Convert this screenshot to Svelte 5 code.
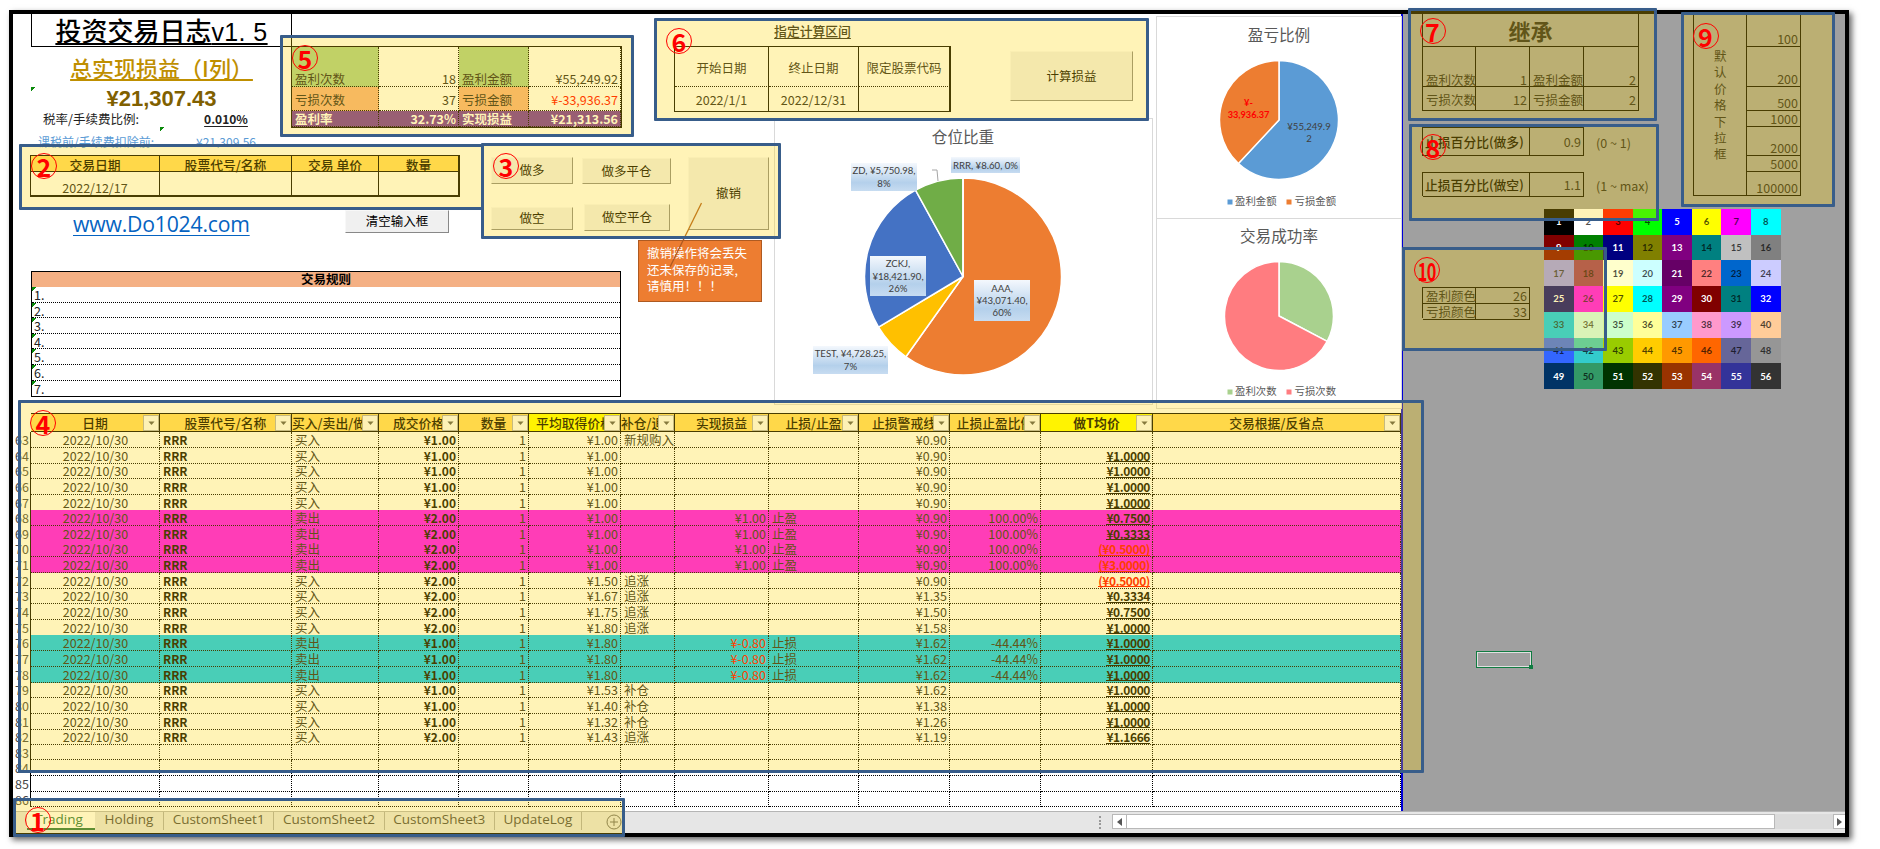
<script>
	const head = [
		{ label: '日期' },
		{ label: '股票代号/名称' },
		{ label: '买入/卖出/做空', left: true },
		{ label: '成交价格' },
		{ label: '数量' },
		{ label: '平均取得价格', hot: true },
		{ label: '补仓/追涨', left: true },
		{ label: '实现损益' },
		{ label: '止损/止盈' },
		{ label: '止损警戒线' },
		{ label: '止损止盈比例' },
		{ label: '做T均价', hot: true, bold: true },
		{ label: '交易根据/反省点' }
	];

	// side, price, average, note, profit, stop, alert line, ratio, T price
	const trades = [
		['买入', '¥1.00', '¥1.00', '新规购入', '', '', '¥0.90', '', ''],
		['买入', '¥1.00', '¥1.00', '', '', '', '¥0.90', '', '¥1.0000'],
		['买入', '¥1.00', '¥1.00', '', '', '', '¥0.90', '', '¥1.0000'],
		['买入', '¥1.00', '¥1.00', '', '', '', '¥0.90', '', '¥1.0000'],
		['买入', '¥1.00', '¥1.00', '', '', '', '¥0.90', '', '¥1.0000'],
		['卖出', '¥2.00', '¥1.00', '', '¥1.00', '止盈', '¥0.90', '100.00%', '¥0.7500'],
		['卖出', '¥2.00', '¥1.00', '', '¥1.00', '止盈', '¥0.90', '100.00%', '¥0.3333'],
		['卖出', '¥2.00', '¥1.00', '', '¥1.00', '止盈', '¥0.90', '100.00%', '(¥0.5000)'],
		['卖出', '¥2.00', '¥1.00', '', '¥1.00', '止盈', '¥0.90', '100.00%', '(¥3.0000)'],
		['买入', '¥2.00', '¥1.50', '追涨', '', '', '¥0.90', '', '(¥0.5000)'],
		['买入', '¥2.00', '¥1.67', '追涨', '', '', '¥1.35', '', '¥0.3334'],
		['买入', '¥2.00', '¥1.75', '追涨', '', '', '¥1.50', '', '¥0.7500'],
		['买入', '¥2.00', '¥1.80', '追涨', '', '', '¥1.58', '', '¥1.0000'],
		['卖出', '¥1.00', '¥1.80', '', '¥-0.80', '止损', '¥1.62', '-44.44%', '¥1.0000'],
		['卖出', '¥1.00', '¥1.80', '', '¥-0.80', '止损', '¥1.62', '-44.44%', '¥1.0000'],
		['卖出', '¥1.00', '¥1.80', '', '¥-0.80', '止损', '¥1.62', '-44.44%', '¥1.0000'],
		['买入', '¥1.00', '¥1.53', '补仓', '', '', '¥1.62', '', '¥1.0000'],
		['买入', '¥1.00', '¥1.40', '补仓', '', '', '¥1.38', '', '¥1.0000'],
		['买入', '¥1.00', '¥1.32', '补仓', '', '', '¥1.26', '', '¥1.0000'],
		['买入', '¥2.00', '¥1.43', '追涨', '', '', '¥1.19', '', '¥1.1666']
	];
	const rows = Array.from({ length: 24 }, (_, i) => ({ n: 63 + i, t: trades[i] }));

	const palette = (
		'000000 FFFFFF FF0000 00FF00 0000FF FFFF00 FF00FF 00FFFF ' +
		'800000 008000 000080 808000 800080 008080 C0C0C0 808080 ' +
		'9999FF 993366 FFFFCC CCFFFF 660066 FF8080 0066CC CCCCFF ' +
		'000080 FF00FF FFFF00 00FFFF 800080 800000 008080 0000FF ' +
		'00CCFF CCFFFF CCFFCC FFFF99 99CCFF FF99CC CC99FF FFCC99 ' +
		'3366FF 33CCCC 99CC00 FFCC00 FF9900 FF6600 666699 969696 ' +
		'003366 339966 003300 333300 993300 993366 333399 333333'
	).split(' ');
	const lightText = [1, 5, 9, 11, 13, 21, 25, 29, 30, 32, 49, 51, 52, 53, 54, 55, 56];

	const buttons = [
		{ text: '做多', x: 491, y: 157, w: 82, h: 27 },
		{ text: '做多平仓', x: 582, y: 158, w: 89, h: 26 },
		{ text: '做空', x: 491, y: 207, w: 82, h: 23 },
		{ text: '做空平仓', x: 584, y: 204, w: 86, h: 27 },
		{ text: '撤销', x: 688, y: 157, w: 81, h: 73 },
		{ text: '清空输入框', x: 345, y: 210, w: 104, h: 23 },
		{ text: '计算损益', x: 1010, y: 51, w: 123, h: 50 }
	];

	const charts = [
		{
			title: '仓位比重', x: 774, y: 118, w: 379, h: 287, cx: 189, cy: 158.5, r: 98.5, ty: 25,
			slices: [
				{ v: 43071.4, c: '#ed7d31' },
				{ v: 4728.25, c: '#ffc000' },
				{ v: 18421.9, c: '#4472c4' },
				{ v: 5750.98, c: '#70ad47' },
				{ v: 8.6, c: '#5b9bd5' }
			],
			labels: [
				{ x: 200, y: 162, w: 56, h: 41, lines: ['AAA,', '¥43,071.40,', '60%'] },
				{ x: 96, y: 138, w: 56, h: 40, lines: ['ZCKJ,', '¥18,421.90,', '26%'] },
				{ x: 77, y: 45, w: 66, h: 28, lines: ['ZD, ¥5,750.98,', '8%'] },
				{ x: 177, y: 39, w: 69, h: 16, lines: ['RRR, ¥8.60, 0%'] },
				{ x: 39, y: 228, w: 75, h: 28, lines: ['TEST, ¥4,728.25,', '7%'] }
			]
		},
		{
			title: '盈亏比例', x: 1156, y: 16, w: 246, h: 203, cx: 123, cy: 104, r: 59.5, ty: 25,
			slices: [
				{ v: 55249.92, c: '#5b9bd5' },
				{ v: 33936.37, c: '#ed7d31' }
			],
			notes: [
				{ x: 153, y: 113.5, lines: ['¥55,249.9', '2'] },
				{ x: 92.5, y: 90, red: true, lines: ['¥-', '33,936.37'] }
			],
			legend: ['盈利金额', '亏损金额']
		},
		{
			title: '交易成功率', x: 1156, y: 218, w: 246, h: 191, cx: 123, cy: 98, r: 54.5, ty: 24,
			slices: [
				{ v: 18, c: '#a9d18e' },
				{ v: 37, c: '#ff7c80' }
			],
			legend: ['盈利次数', '亏损次数']
		}
	];

	function arcs({ slices, cx, cy, r }) {
		const total = slices.reduce((s, d) => s + d.v, 0);
		let a = 0;
		return slices.map((d) => {
			const b = a + (d.v / total) * Math.PI * 2;
			const path = `M${cx},${cy}L${cx + r * Math.sin(a)},${cy - r * Math.cos(a)}A${r},${r} 0 ${b - a > Math.PI ? 1 : 0} 1 ${cx + r * Math.sin(b)},${cy - r * Math.cos(b)}Z`;
			a = b;
			return { path, c: d.c };
		});
	}

	// highlighted regions with their number badge (bx, by is the badge centre)
	const regions = [
		{ n: 1, x: 13, y: 798, w: 612, h: 39, bx: 37.5, by: 820 },
		{ n: 2, x: 19, y: 144, w: 465, h: 66, bx: 44, by: 166 },
		{ n: 3, x: 481, y: 143, w: 300, h: 96, bx: 506, by: 165.5 },
		{ n: 4, x: 18, y: 400, w: 1406, h: 373, bx: 43, by: 422.5 },
		{ n: 5, x: 280, y: 35, w: 354, h: 102, bx: 305, by: 57.5 },
		{ n: 6, x: 654, y: 18, w: 495, h: 103, bx: 679, by: 41 },
		{ n: 7, x: 1408, y: 8, w: 249, h: 113, bx: 1432.5, by: 30.5 },
		{ n: 8, x: 1409, y: 124, w: 250, h: 97, bx: 1433, by: 146.5 },
		{ n: 9, x: 1681, y: 12, w: 154, h: 195, bx: 1705.5, by: 35.5 },
		{ n: 10, x: 1402, y: 247, w: 205, h: 104, bx: 1426.5, by: 269.5 }
	];

	const prices = [100, 200, 500, 1000, 2000, 5000, 100000];
	const tabs = ['Holding', 'CustomSheet1', 'CustomSheet2', 'CustomSheet3', 'UpdateLog'];
</script>

<main>
	<div class="window">
		<div class="sheet">
			<div class="grid top">
				<div class="title"><u>投资交易日志<span>v1.&nbsp;5</span></u></div>
				<div class="total-label"><u>总实现损益（I列）</u></div>
				<div class="total flag">¥21,307.43</div>
				<div class="rate">税率/手续费比例:</div>
				<div class="rate-value"><u>0.010%</u></div>
				<div class="before">课税前/手续费扣除前:</div>
				<div class="before-value flag">¥21,309.56</div>

				<div class="stats">
					<div class="green">盈利次数</div>
					<div class="num">18</div>
					<div class="green">盈利金额</div>
					<div class="num">¥55,249.92</div>
					<div class="orange">亏损次数</div>
					<div class="num">37</div>
					<div class="orange">亏损金额</div>
					<div class="num red">¥-33,936.37</div>
					<div class="purple">盈利率</div>
					<div class="purple num">32.73%</div>
					<div class="purple">实现损益</div>
					<div class="purple num">¥21,313.56</div>
				</div>

				<div class="range-title"><u>指定计算区间</u></div>
				<div class="range">
					<div>开始日期</div>
					<div>终止日期</div>
					<div>限定股票代码</div>
					<div>2022/1/1</div>
					<div>2022/12/31</div>
					<div></div>
				</div>

				<div class="entry">
					<div class="th">交易日期</div>
					<div class="th">股票代号/名称</div>
					<div class="th">交易 单价</div>
					<div class="th">数量</div>
					<div>2022/12/17</div>
					<div></div>
					<div></div>
					<div></div>
				</div>

				<a class="site" href="#top">www.Do1024.com</a>

				<div class="rules">
					<div class="rules-head">交易规则</div>
					{#each [1, 2, 3, 4, 5, 6, 7] as n}
						<div class="rule flag">{n}.</div>
					{/each}
				</div>

				<div class="inherit">
					<div class="inherit-title">继承</div>
					<div class="tall">盈利次数</div>
					<div class="tall num">1</div>
					<div class="tall">盈利金额</div>
					<div class="tall num">2</div>
					<div>亏损次数</div>
					<div class="num">12</div>
					<div>亏损金额</div>
					<div class="num">2</div>
				</div>

				<div class="stop long">
					<b>止损百分比(做多)</b>
					<div class="num">0.9</div>
				</div>
				<div class="hint long">(0 ~ 1)</div>
				<div class="stop short">
					<b>止损百分比(做空)</b>
					<div class="num">1.1</div>
				</div>
				<div class="hint short">(1 ~ max)</div>

				<div class="prices">
					<div class="prices-label">默认价格下拉框</div>
					{#each prices as p}
						<div class="price">{p}</div>
					{/each}
				</div>

				<div class="colors">
					<div>盈利颜色</div>
					<div class="num">26</div>
					<div>亏损颜色</div>
					<div class="num">33</div>
				</div>
			</div>

			<div class="grid head">
				<i></i>
				{#each head as h}
					<div class="th" class:hot={h.hot} class:left={h.left} class:bold={h.bold}>
						{h.label}
						<span class="filter"><svg viewBox="0 0 8 5"><path d="M0.5 0.5h7L4 4.5z" /></svg></span>
					</div>
				{/each}
			</div>
			{#each rows as { n, t }}
				<div class="grid row" class:win={t && t[5] === '止盈'} class:loss={t && t[5] === '止损'}>
					<div class="n">{n}</div>
					<div class="c">{t ? '2022/10/30' : ''}</div>
					<div class="b">{t ? 'RRR' : ''}</div>
					<div>{t ? t[0] : ''}</div>
					<div class="num b">{t ? t[1] : ''}</div>
					<div class="num">{t ? '1' : ''}</div>
					<div class="num">{t ? t[2] : ''}</div>
					<div>{t ? t[3] : ''}</div>
					<div class="num" class:red={t && t[4].includes('-')}>{t ? t[4] : ''}</div>
					<div>{t ? t[5] : ''}</div>
					<div class="num">{t ? t[6] : ''}</div>
					<div class="num">{t ? t[7] : ''}</div>
					<div class="num b t" class:red={t && t[8].includes('(')}>
						{#if t && t[8]}<span>{t[8]}</span>{/if}
					</div>
					<div></div>
				</div>
			{/each}
		</div>

		<footer>
			<div class="tab active">Trading</div>
			{#each tabs as tab}
				<div class="tab {tab}">{tab}</div>
			{/each}
			<svg class="plus" viewBox="0 0 16 16"><circle cx="8" cy="8" r="7" /><path d="M8 4v8M4 8h8" /></svg>
			<div class="dots"><i></i><i></i><i></i><i></i></div>
			<div class="scroll">
				<div class="arrow"><svg viewBox="0 0 5 8"><path d="M5 0v8L0 4z" /></svg></div>
				<div class="thumb"></div>
				<div class="arrow end"><svg viewBox="0 0 5 8"><path d="M0 0v8l5-4z" /></svg></div>
			</div>
		</footer>
	</div>

	<div class="callout">撤销操作将会丢失<br />还未保存的记录,<br />请慎用！！！</div>

	{#each charts as ch}
		<svg class="chart" style="left: {ch.x}px; top: {ch.y}px;" width={ch.w} height={ch.h}>
			<defs>
				<linearGradient id="label" x1="0" y1="0" x2="0" y2="1">
					<stop offset="0" stop-color="#f4f8fd" />
					<stop offset="0.7" stop-color="#b4d0eb" />
					<stop offset="1" stop-color="#c7dcf1" />
				</linearGradient>
			</defs>
			<rect class="frame" x="0.5" y="0.5" width={ch.w - 1} height={ch.h - 1} />
			<text class="chart-title" x={ch.cx} y={ch.ty}>{ch.title}</text>
			{#each arcs(ch) as arc}
				<path class="slice" d={arc.path} fill={arc.c} />
			{/each}
			{#if ch.labels}
				<path class="leader" d="M158 52h5l1 11" />
				{#each ch.labels as l}
					<rect x={l.x} y={l.y} width={l.w} height={l.h} fill="url(#label)" />
					{#each l.lines as line, i}
						<text class="label" x={l.x + l.w / 2} y={l.y + l.h / 2 + 3.5 + (i - (l.lines.length - 1) / 2) * 12.2}>{line}</text>
					{/each}
				{/each}
			{/if}
			{#each ch.notes || [] as note}
				{#each note.lines as line, i}
					<text class="label" class:alert={note.red} x={note.x} y={note.y + i * 12}>{line}</text>
				{/each}
			{/each}
			{#each ch.legend || [] as name, i}
				<rect x={71.5 + i * 59} y={ch.h - 19.5} width="5" height="5" fill={ch.slices[i].c} />
				<text class="legend" x={79 + i * 59.5} y={ch.h - 14}>{name}</text>
			{/each}
		</svg>
	{/each}

	{#each buttons as b}
		<button style="left: {b.x}px; top: {b.y}px; width: {b.w}px; height: {b.h}px;">{b.text}</button>
	{/each}

	<svg class="pointer" width="34" height="66"><path d="M32.5 1L1 65" /></svg>

	<div class="palette">
		{#each palette as c, i}
			<div class:light={lightText.includes(i + 1)} style="background: #{c};">{i + 1}</div>
		{/each}
	</div>

	<div class="selection"></div>

	{#each regions as r}
		<div class="region" style="left: {r.x}px; top: {r.y}px; width: {r.w}px; height: {r.h}px;"></div>
		<span class="badge" class:narrow={r.n > 9} style="left: {r.bx - 13}px; top: {r.by - 13}px;"><b>{r.n}</b></span>
	{/each}
</main>

<style>
	:global(body) {
		background: #fff;
	}

	main {
		position: relative;
		box-sizing: border-box;
		width: 1880px;
		height: 849px;
		padding: 10px 0 0 9px;
		overflow: hidden;
		font-family: 'Noto Sans CJK SC', 'Noto Sans', sans-serif;
		font-size: 12.5px;
		line-height: 15px;
		color: #222;
	}

	main :global(*) {
		box-sizing: border-box;
	}

	u {
		text-underline-offset: 2px;
	}

	.window {
		display: flex;
		flex-direction: column;
		width: 1840px;
		height: 827px;
		border: 4px solid #000;
		box-shadow: 3px 3px 6px rgba(0, 0, 0, 0.6);
	}

	.sheet {
		height: 797px;
		overflow: hidden;
		background: linear-gradient(to right, #fff 1388px, #0000d8 1388px, #0000d8 1390px, #a0a0a0 1390px);
	}

	.grid {
		display: grid;
		grid-template-columns: 18px 129px 132px 87px 80px 70px 92px 54px 94px 90px 91px 91px 112px 248px;
	}

	.top {
		grid-template-columns:
			18px 129px 132px 87px 80px 70px 92px 54px 94px 90px 91px 91px 112px 248px
			21px 54px 54px 54px 55px 54px 54px 54px;
		grid-template-rows: 33px 40px 24px 16px 29px 16px 24px 75px 16px 16px 15px 16px 15px 16px 16px 16px 16px;
		height: 399px;
		white-space: nowrap;
	}

	.num {
		text-align: right;
	}

	.red {
		color: #ff0000 !important;
	}

	.flag {
		background-image: linear-gradient(135deg, #0a8a0a 3.5px, transparent 3.5px);
		background-repeat: no-repeat;
	}

	.title {
		grid-area: 1 / 2 / 2 / 4;
		border: 1px solid #000;
		border-top: 0;
		text-align: center;
		font-size: 26px;
		font-weight: 500;
		line-height: 32px;
		color: #000;
	}

	.title span {
		font-family: 'Liberation Sans', sans-serif;
		font-size: 25px;
		letter-spacing: 0.4px;
	}

	.total-label {
		grid-area: 2 / 2 / 3 / 4;
		text-align: center;
		font-size: 22px;
		font-weight: 500;
		line-height: 40px;
		color: #bf8f00;
	}

	.total {
		grid-area: 3 / 2 / 4 / 4;
		text-align: center;
		font: bold 22px/23px 'Liberation Sans', sans-serif;
		color: #806000;
	}

	.rate {
		grid-area: 4 / 2;
		padding-left: 12px;
	}

	.rate-value {
		grid-area: 4 / 3;
		text-align: center;
		font-size: 12px;
		font-weight: bold;
	}

	.before,
	.before-value {
		grid-area: 5 / 2;
		height: 21px;
		padding: 7px 0 0 7px;
		overflow: hidden;
		font-size: 12px;
		color: #5b9bd5;
	}

	.before-value {
		grid-area: 5 / 3;
		padding-left: 36px;
	}

	.stats {
		grid-area: 2 / 4 / 5 / 8;
		display: grid;
		grid-template: 40px 24px 16px / 87px 80px 70px 92px;
		align-items: stretch;
		outline: 1px solid #000;
	}

	.stats div {
		display: flex;
		align-items: flex-end;
		padding: 0 2px 0 3px;
		border: dotted #000;
		border-width: 0 1px 1px 0;
		line-height: 14px;
	}

	.stats div:nth-child(n + 5) {
		align-items: center;
		padding-top: 2px;
	}

	.stats div:nth-child(n + 9) {
		padding-top: 0;
	}

	.stats .num {
		justify-content: flex-end;
	}

	.green {
		background: #a9d08e;
	}

	.orange {
		background: #f4b084;
	}

	.stats .purple {
		background: #7030a0;
		color: #fff;
		font-weight: bold;
	}

	.range-title {
		grid-area: 1 / 9 / 2 / 12;
		text-align: center;
		font-weight: 500;
		font-size: 12.8px;
		line-height: 33px;
	}

	.range {
		grid-area: 2 / 9 / 4 / 12;
		display: grid;
		grid-template: 40px 24px / 94px 90px 91px;
		outline: 1.5px solid #000;
		text-align: center;
		line-height: 42px;
	}

	.range div {
		border-right: 1px solid #000;
		border-bottom: 1px dotted #000;
	}

	.range div:nth-child(n + 4) {
		border-bottom: 0;
		line-height: 25px;
	}

	.entry {
		grid-area: 6 / 2 / 8 / 6;
		display: grid;
		grid-template: 16px 24px / 129px 132px 87px 80px;
		outline: 1px solid #000;
		outline-offset: -0.5px;
	}

	.entry div {
		border: solid #000;
		border-width: 0 1px 1px 0;
		text-align: center;
		line-height: 32px;
	}

	.entry .th {
		line-height: 17px;
	}

	.th {
		background: #ffd966;
		font-size: 12.8px;
		font-weight: 500;
		color: #000;
	}

	.site {
		grid-area: 8 / 2 / 9 / 4;
		padding: 14px 0 0 42px;
		font: 21.2px/28px 'Open Sans', 'Noto Sans', sans-serif;
		letter-spacing: -0.2px;
		text-decoration-thickness: 1px;
		text-underline-offset: 3px;
		color: #0563c1;
	}

	.rules {
		grid-area: 9 / 2 / 17 / 8;
		display: grid;
		grid-template-rows: subgrid;
		border: 1px solid #000;
		outline: 1px solid #000;
		outline-offset: -1.5px;
	}

	.rules-head {
		background: #f4b084;
		text-align: center;
		font-weight: bold;
		line-height: 14px;
		color: #000;
	}

	.rule {
		padding: 1px 0 0 2px;
		border-bottom: 1px dotted #000;
		line-height: 14px;
	}

	.rule:last-child {
		border-bottom: 0;
	}

	.inherit {
		grid-area: 1 / 16 / 4 / 20;
		display: grid;
		grid-template: subgrid / subgrid;
		border-left: 1px solid #000;
	}

	.inherit div,
	.colors div,
	.stop > * {
		padding: 0 2px 0 3px;
		border: solid #000;
		border-width: 0 1px 1px 0;
	}

	.inherit div {
		line-height: 26px;
	}

	.inherit .tall {
		padding-top: 20px;
		line-height: 25px;
	}

	.inherit .tall,
	.inherit div,
	.colors div {
		height: 100%;
		min-height: 0;
	}

	.inherit .inherit-title {
		grid-column: 1 / -1;
		padding: 0;
		text-align: center;
		font-size: 22px;
		font-weight: bold;
		line-height: 32px;
	}

	.stop {
		display: grid;
		grid-column: 16 / 19;
		grid-template-columns: subgrid;
		border: solid #000;
		border-width: 1px 0 0 1px;
		line-height: 27px;
	}

	.stop b {
		grid-column: span 2;
		padding-left: 2px;
		font-weight: 500;
		font-size: 12.8px;
		line-height: inherit;
		color: #000;
	}

	.long {
		grid-row: 5;
	}

	.short {
		grid-row: 7;
		line-height: 23px;
	}

	.hint {
		grid-column: 19 / 22;
		padding: 8px 0 0 12px;
		line-height: 15px;
	}

	.hint.short {
		padding-top: 6px;
	}

	.prices {
		grid-area: 1 / 21 / 8 / 23;
		display: grid;
		grid-template: subgrid / subgrid;
		border-bottom: 1px solid #000;
		border-left: 1px solid #000;
	}

	.prices-label {
		grid-area: 1 / 1 / 8 / 2;
		padding: 34px 20px 0;
		white-space: normal;
		line-height: 16.4px;
		border-right: 1px solid #000;
	}

	.price {
		display: flex;
		grid-column: 2;
		align-items: flex-end;
		justify-content: flex-end;
		padding-right: 2px;
		border: solid #000;
		border-width: 0 1px 1px 0;
		line-height: 14px;
	}

	.price:last-child {
		border-bottom: 0;
	}

	.colors {
		grid-area: 10 / 16 / 12 / 18;
		display: grid;
		grid-template: 16px 16px / subgrid;
		border-left: 1px solid #000;
		border-top: 1px solid #000;
	}

	.head {
		height: 19px;
	}

	.head .th {
		position: relative;
		overflow: hidden;
		border: 1px solid #000;
		border-width: 1px 1px 1px 0;
		line-height: 18px;
		text-align: center;
		white-space: nowrap;
	}

	.head .left {
		text-align: left;
	}

	.head .hot {
		background: #ff0;
	}

	.head .bold {
		font-weight: bold;
	}

	.filter {
		position: absolute;
		right: 0;
		bottom: 0;
		display: flex;
		align-items: center;
		justify-content: center;
		width: 16px;
		height: 16px;
		border: 1px solid #b0b0b0;
		background: #fdfdfd;
	}

	.filter svg {
		width: 7px;
		fill: #555;
	}

	.row {
		height: 15.65px;
		line-height: 15px;
		white-space: nowrap;
	}

	.row div {
		padding: 0 2px 0 3px;
		border: dotted #000;
		border-width: 0 1px 1px 0;
	}

	.row .n {
		padding: 0 1px;
		border: 0;
		border-right: 1px solid #000;
		text-align: right;
		color: #444;
	}

	.row .c {
		text-align: center;
	}

	.row .b {
		font-weight: bold;
		font-size: 12px;
		color: #000;
	}

	.row .t {
		letter-spacing: -0.4px;
	}

	.row .t span {
		display: inline-block;
		height: 14.6px;
		border-bottom: 1px solid currentColor;
		vertical-align: top;
	}

	.win > :not(.n) {
		background: #f0f;
	}

	.loss > :not(.n) {
		background: #0cf;
	}

	footer {
		display: flex;
		align-items: flex-start;
		height: 22px;
		border-top: 1px solid #b5b5b5;
		background: #e6e6e6;
		font-family: 'Open Sans', 'Noto Sans', sans-serif;
		font-size: 13.5px;
		color: #444;
	}

	.tab {
		width: 110.3px;
		height: 18px;
		line-height: 14px;
		text-align: center;
		border-right: 1px solid #ababab;
	}

	.active {
		width: 68px;
		margin-left: 14px;
		padding-right: 4px;
		border-right: 0;
		border-bottom: 2px solid #217346;
		background: #fff;
		color: #217346;
	}

	.Holding {
		width: 69px;
	}

	.UpdateLog {
		width: 87px;
	}

	.plus {
		width: 16px;
		height: 16px;
		margin: 2px 0 0 24px;
		fill: none;
		stroke: #666;
	}

	.dots {
		display: flex;
		flex-direction: column;
		gap: 1.5px;
		margin: 4px 11px 0 auto;
	}

	.dots i {
		width: 2px;
		height: 2px;
		background: #999;
	}

	.scroll {
		display: flex;
		width: 733px;
		height: 15px;
		margin-top: 2px;
		background: #dbdbdb;
	}

	.arrow {
		display: flex;
		align-items: center;
		justify-content: center;
		width: 15px;
		border: 1px solid #b8b8b8;
		background: #fff;
	}

	.arrow svg {
		width: 5px;
		height: 8px;
		fill: #555;
	}

	.end {
		width: 12px;
		margin-left: auto;
		border-right: 0;
	}

	.thumb {
		width: 648px;
		border: 1px solid #b8b8b8;
		border-left: 0;
		background: #fff;
	}

	.chart,
	.pointer,
	.palette,
	.selection,
	.callout,
	.region,
	.badge,
	button {
		position: absolute;
	}

	.frame {
		fill: #fff;
		stroke: #d9d9d9;
	}

	.chart text {
		text-anchor: middle;
		fill: #404040;
	}

	.chart .chart-title {
		font-size: 15.6px;
		fill: #595959;
	}

	.chart .label {
		font: 9.6px Lato, sans-serif;
	}

	.chart .alert {
		font-weight: bold;
		font-size: 9.2px;
		fill: #f00;
	}

	.chart .legend {
		font-size: 10.4px;
		text-anchor: start;
		fill: #595959;
	}

	.slice {
		stroke: #fff;
		stroke-width: 1.5;
		stroke-linejoin: round;
	}

	.leader {
		fill: none;
		stroke: #a6a6a6;
	}

	button {
		padding: 0 0 2px;
		border: solid #888;
		border-width: 0 1.5px 1.5px 0;
		border-top: 1px solid #f8f8f8;
		border-left: 1px solid #f8f8f8;
		border-radius: 0;
		background: #f0f0f0;
		font: inherit;
		color: #000;
	}

	.callout {
		left: 638px;
		top: 240px;
		width: 124px;
		height: 62px;
		padding: 4px 0 0 8px;
		border: 1px solid #ae5a21;
		background: #ed7d31;
		line-height: 16.6px;
		color: #fff;
	}

	.pointer {
		left: 669px;
		top: 202px;
		fill: none;
		stroke: #ae5a21;
		stroke-width: 1.3;
	}

	.palette {
		left: 1544px;
		top: 209px;
		display: grid;
		grid-template: repeat(7, 1fr) / repeat(8, 1fr);
		width: 236.5px;
		height: 180px;
	}

	.palette div {
		display: flex;
		align-items: center;
		justify-content: center;
		font: bold 9.5px Lato, sans-serif;
		color: rgba(0, 0, 0, 0.7);
	}

	.palette .light {
		color: #fff;
	}

	.selection {
		left: 1476px;
		top: 651px;
		width: 56px;
		height: 17px;
		border: 1px solid #107c41;
		box-shadow: inset 0 0 0 1px #e0e0e0;
	}

	.selection::after {
		content: '';
		position: absolute;
		right: -2px;
		bottom: -2px;
		width: 4px;
		height: 4px;
		background: #107c41;
	}

	.region {
		border: 3px solid #385d8a;
		border-radius: 1px;
		background: rgba(255, 214, 4, 0.286);
		background-clip: padding-box;
	}

	.badge {
		display: flex;
		align-items: center;
		justify-content: center;
		width: 26px;
		height: 26px;
		border: 1.7px solid #f00;
		border-radius: 50%;
		font-size: 25px;
		line-height: 24px;
		color: #f00;
	}

	.narrow b {
		transform: scaleX(0.65);
		letter-spacing: -1px;
	}
</style>
